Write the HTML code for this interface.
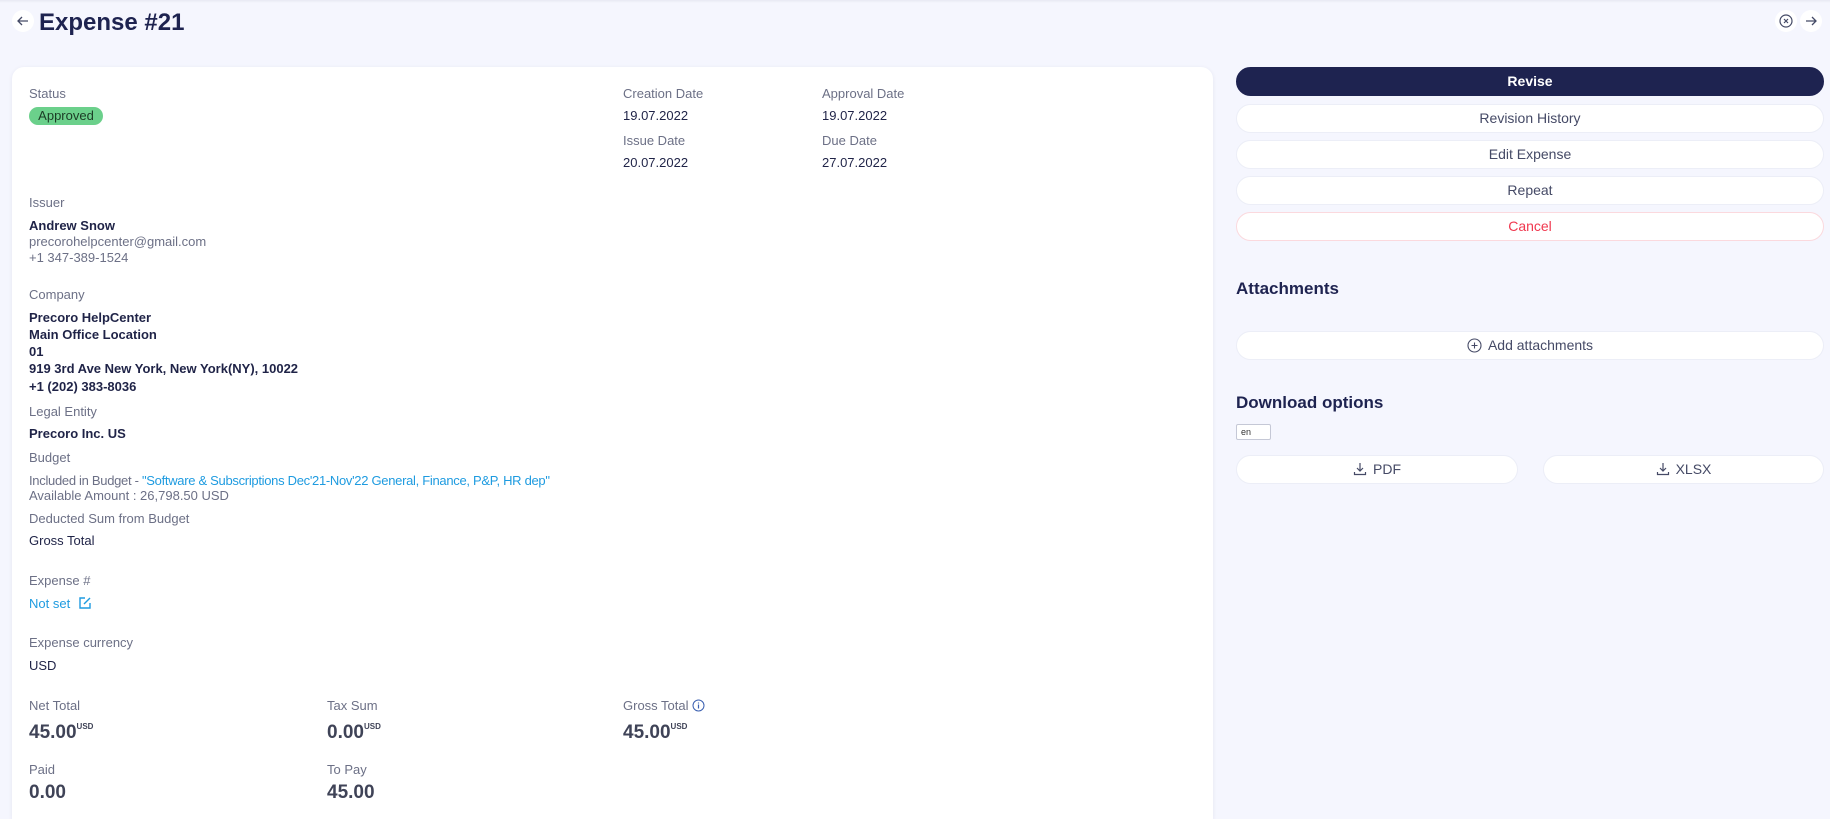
<!DOCTYPE html>
<html style="overflow:hidden;height:819px"><head><meta charset="utf-8"><style>
*{margin:0;padding:0;box-sizing:border-box}
body{width:1830px;height:819px;overflow:hidden;background:#f5f6fe;font-family:"Liberation Sans",sans-serif;position:relative;color:#1f2347}
.a{position:absolute;white-space:nowrap;line-height:16px;font-size:13px}
.l{color:#6c7086}
.v{color:#1f2347}
.b{font-weight:bold}
.card{position:absolute;left:12px;top:67px;width:1201px;height:752px;background:#fff;border-radius:12px 12px 0 0;box-shadow:0 1px 4px rgba(40,40,90,.08)}
.btn{position:absolute;left:1236px;width:588px;height:29px;border-radius:15px;background:#fff;border:1px solid #eceef7;text-align:center;line-height:27px;font-size:14px;color:#454a66}
.big{font-size:19px;font-weight:bold;color:#3f4357;line-height:22px}
.big sup{font-size:8px;vertical-align:9px;font-weight:bold}
.circ{position:absolute;width:22px;height:22px;border-radius:50%;background:#fff;top:10px}
</style></head><body>
<div style="position:absolute;left:0;top:0;width:1830px;height:3px;background:linear-gradient(#e8e9f3,#f5f6fe)"></div>
<div class="circ" style="left:12px"><svg width="22" height="22" viewBox="0 0 22 22"><path d="M16 11H6M10 7l-4 4 4 4" fill="none" stroke="#444a66" stroke-width="1.3"/></svg></div>
<div class="a b" style="left:39px;top:8px;font-size:24px;line-height:30px;color:#1e2350">Expense #21</div>
<div class="circ" style="left:1775px"><svg width="22" height="22" viewBox="0 0 22 22"><circle cx="11" cy="11" r="6" fill="none" stroke="#444a66" stroke-width="1.2"/><path d="M9 9l4 4M13 9l-4 4" stroke="#444a66" stroke-width="1.2"/></svg></div>
<div class="circ" style="left:1800px"><svg width="22" height="22" viewBox="0 0 22 22"><path d="M6 11h10M12 7l4 4-4 4" fill="none" stroke="#444a66" stroke-width="1.3"/></svg></div>

<div class="card"></div>
<div class="a l" style="left:29px;top:86px">Status</div>
<div class="a" style="left:29px;top:107px;height:18px;width:74px;border-radius:9px;background:#6bd08b;color:#1b3b25;font-size:13px;line-height:18px;text-align:center">Approved</div>
<div class="a l" style="left:623px;top:86px">Creation Date</div>
<div class="a v" style="left:623px;top:108px">19.07.2022</div>
<div class="a l" style="left:623px;top:133px">Issue Date</div>
<div class="a v" style="left:623px;top:155px">20.07.2022</div>
<div class="a l" style="left:822px;top:86px">Approval Date</div>
<div class="a v" style="left:822px;top:108px">19.07.2022</div>
<div class="a l" style="left:822px;top:133px">Due Date</div>
<div class="a v" style="left:822px;top:155px">27.07.2022</div>

<div class="a l" style="left:29px;top:195px">Issuer</div>
<div class="a v b" style="left:29px;top:218px">Andrew Snow</div>
<div class="a l" style="left:29px;top:234px">precorohelpcenter@gmail.com</div>
<div class="a l" style="left:29px;top:250px">+1 347-389-1524</div>

<div class="a l" style="left:29px;top:287px">Company</div>
<div class="a v b" style="left:29px;top:310px">Precoro HelpCenter</div>
<div class="a v b" style="left:29px;top:327px">Main Office Location</div>
<div class="a v b" style="left:29px;top:344px">01</div>
<div class="a v b" style="left:29px;top:361px">919 3rd Ave New York, New York(NY), 10022</div>
<div class="a v b" style="left:29px;top:379px">+1 (202) 383-8036</div>
<div class="a l" style="left:29px;top:404px">Legal Entity</div>
<div class="a v b" style="left:29px;top:426px">Precoro Inc. US</div>
<div class="a l" style="left:29px;top:450px">Budget</div>
<div class="a l" style="left:29px;top:473px;letter-spacing:-0.3px">Included in Budget - <span style="color:#1e9be0">"Software &amp; Subscriptions Dec'21-Nov'22 General, Finance, P&amp;P, HR dep"</span></div>
<div class="a l" style="left:29px;top:488px">Available Amount : 26,798.50 USD</div>
<div class="a l" style="left:29px;top:511px">Deducted Sum from Budget</div>
<div class="a v" style="left:29px;top:533px">Gross Total</div>

<div class="a l" style="left:29px;top:573px">Expense #</div>
<div class="a" style="left:29px;top:596px;color:#1e9be0">Not set <svg width="14" height="14" viewBox="0 0 14 14" style="vertical-align:-2px;margin-left:4px"><path d="M7 2H2v10h10V7" fill="none" stroke="#1e9be0" stroke-width="1.4"/><path d="M6 8l6-6" stroke="#1e9be0" stroke-width="1.4"/></svg></div>
<div class="a l" style="left:29px;top:635px">Expense currency</div>
<div class="a v" style="left:29px;top:658px">USD</div>

<div class="a l" style="left:29px;top:698px">Net Total</div>
<div class="a big" style="left:29px;top:716px">45.00<sup>USD</sup></div>
<div class="a l" style="left:327px;top:698px">Tax Sum</div>
<div class="a big" style="left:327px;top:716px">0.00<sup>USD</sup></div>
<div class="a l" style="left:623px;top:698px">Gross Total <svg width="13" height="13" viewBox="0 0 13 13" style="vertical-align:-2px"><circle cx="6.5" cy="6.5" r="5.5" fill="none" stroke="#3a5fb0" stroke-width="1"/><path d="M6.5 5.5v4M6.5 3.5v1" stroke="#3a5fb0" stroke-width="1.2"/></svg></div>
<div class="a big" style="left:623px;top:716px">45.00<sup>USD</sup></div>
<div class="a l" style="left:29px;top:762px">Paid</div>
<div class="a big" style="left:29px;top:782px">0.00</div>
<div class="a l" style="left:327px;top:762px">To Pay</div>
<div class="a big" style="left:327px;top:782px">45.00</div>

<div class="btn" style="top:67px;background:#1e2350;border-color:#1e2350;color:#fff;font-weight:bold">Revise</div>
<div class="btn" style="top:104px">Revision History</div>
<div class="btn" style="top:140px">Edit Expense</div>
<div class="btn" style="top:176px">Repeat</div>
<div class="btn" style="top:212px;border-color:#fbd9de;color:#f0384f">Cancel</div>
<div class="a b" style="left:1236px;top:279px;font-size:17px;line-height:20px;color:#1e2350">Attachments</div>
<div class="btn" style="top:331px"><svg width="15" height="15" viewBox="0 0 15 15" style="vertical-align:-3px;margin-right:6px"><circle cx="7.5" cy="7.5" r="6.5" fill="none" stroke="#454a66" stroke-width="1.1"/><path d="M7.5 4.5v6M4.5 7.5h6" stroke="#454a66" stroke-width="1.1"/></svg>Add attachments</div>
<div class="a b" style="left:1236px;top:393px;font-size:17px;line-height:20px;color:#1e2350">Download options</div>
<div class="a" style="left:1236px;top:424px;width:35px;height:16px;border:1px solid #c5c8d6;border-radius:2px;font-size:9px;line-height:14px;padding-left:4px;color:#333;background:#fff">en</div>
<div class="btn" style="top:455px;width:282px"><svg width="14" height="14" viewBox="0 0 14 14" style="vertical-align:-2px;margin-right:6px"><path d="M7 1v8M4 6l3 3 3-3M1.5 10v2.5h11V10" fill="none" stroke="#454a66" stroke-width="1.2"/></svg>PDF</div>
<div class="btn" style="top:455px;left:1543px;width:281px"><svg width="14" height="14" viewBox="0 0 14 14" style="vertical-align:-2px;margin-right:6px"><path d="M7 1v8M4 6l3 3 3-3M1.5 10v2.5h11V10" fill="none" stroke="#454a66" stroke-width="1.2"/></svg>XLSX</div>
</body></html>
